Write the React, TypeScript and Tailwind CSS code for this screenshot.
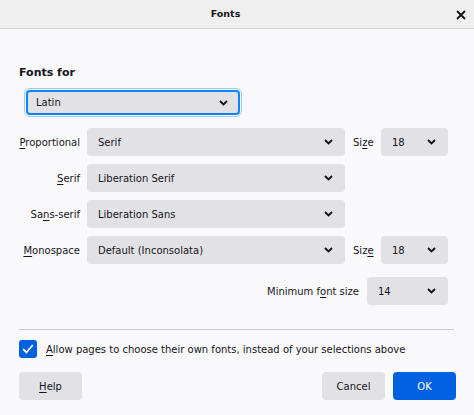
import React from "react";

const Chevron = () => (
  <svg width="9" height="6" viewBox="0 0 9 6" className="shrink-0">
    <path d="M1 1l3.5 3.5L8 1" fill="none" stroke="#15141a" strokeWidth="1.9" />
  </svg>
);

const Select = ({
  value,
  className = "",
}: {
  value: string;
  className?: string;
}) => (
  <div
    className={`h-[28px] rounded-[4px] bg-[#e2e2e6] flex items-center justify-between pl-[11px] pr-[12px] ${className}`}
  >
    <span>{value}</span>
    <Chevron />
  </div>
);

// underline mnemonic letter
const U = ({ children }: { children: React.ReactNode }) => (
  <span className="underline underline-offset-2">{children}</span>
);

export default function App() {
  return (
    <div
      className="w-[474px] h-[415px] bg-[#f9f9fb] text-[#15141a] text-[10px] flex flex-col overflow-hidden"
      style={{ fontFamily: '"DejaVu Sans", sans-serif' }}
    >
      {/* title bar */}
      <div className="h-[29px] shrink-0 bg-[#efeff0] border-b border-[#d6d6d8] flex items-center relative">
        <div className="flex-1 text-center font-bold text-[9.5px] pr-[23px]">Fonts</div>
        <svg
          width="10"
          height="10"
          viewBox="0 0 10 10"
          className="absolute right-[8px] top-[10px]"
        >
          <path d="M1 1l8 8M9 1l-8 8" stroke="#15141a" strokeWidth="1.8" />
        </svg>
      </div>

      <div className="flex flex-col px-[19px]">
        <div className="mt-[37px] font-bold text-[11px] leading-[14px]">Fonts for</div>

        <div className="mt-[8px] ml-[5px] w-[218px] h-[29px] rounded-[6px] border border-[#9ccaf8] p-[1px]">
          <div className="h-full rounded-[4px] border-2 border-[#0a84ff] bg-[#e2e2e6] flex items-center justify-between pl-[8px] pr-[10px]">
            <span>Latin</span>
            <Chevron />
          </div>
        </div>

        <div className="mt-[11px] grid grid-cols-[61px_258px_22px_67px] gap-x-[7px] gap-y-[8px] items-center">
          <div className="text-right">
            <U>P</U>roportional
          </div>
          <Select value="Serif" />
          <div className="ml-[1px] whitespace-nowrap">
            Si<U>z</U>e
          </div>
          <Select value="18" />

          <div className="text-right">
            <U>S</U>erif
          </div>
          <Select value="Liberation Serif" />
          <div />
          <div />

          <div className="text-right">
            Sa<U>n</U>s-serif
          </div>
          <Select value="Liberation Sans" />
          <div />
          <div />

          <div className="text-right">
            <U>M</U>onospace
          </div>
          <Select value="Default (Inconsolata)" />
          <div className="ml-[1px] whitespace-nowrap">
            Siz<U>e</U>
          </div>
          <Select value="18" />
        </div>

        <div className="mt-[13px] flex justify-end items-center gap-[8px] pr-[7px]">
          <div>
            Minimum f<U>o</U>nt size
          </div>
          <Select value="14" className="w-[81px]" />
        </div>

        <div className="mt-[24px] border-t border-[#d0d0d4] mr-[1px]" />

        <div className="mt-[10px] flex items-center gap-[9px]">
          <div className="w-[18px] h-[18px] rounded-[3px] bg-[#0061e0] flex items-center justify-center">
            <svg width="12" height="10" viewBox="0 0 12 10">
              <path
                d="M1.2 5.2l3.2 3.3L10.8 1"
                fill="none"
                stroke="#ffffff"
                strokeWidth="1.8"
              />
            </svg>
          </div>
          <div>
            <U>A</U>llow pages to choose their own fonts, instead of your selections above
          </div>
        </div>

        <div className="mt-[14px] flex items-center">
          <div className="w-[63px] h-[28px] rounded-[4px] bg-[#e2e2e6] flex items-center justify-center">
            <span>
              <U>H</U>elp
            </span>
          </div>
          <div className="flex-1" />
          <div className="w-[63px] h-[28px] rounded-[4px] bg-[#e2e2e6] flex items-center justify-center">
            Cancel
          </div>
          <div className="ml-[8px] mr-[-1px] w-[63px] h-[28px] rounded-[4px] bg-[#0061e0] text-white flex items-center justify-center">
            OK
          </div>
        </div>
      </div>
    </div>
  );
}
